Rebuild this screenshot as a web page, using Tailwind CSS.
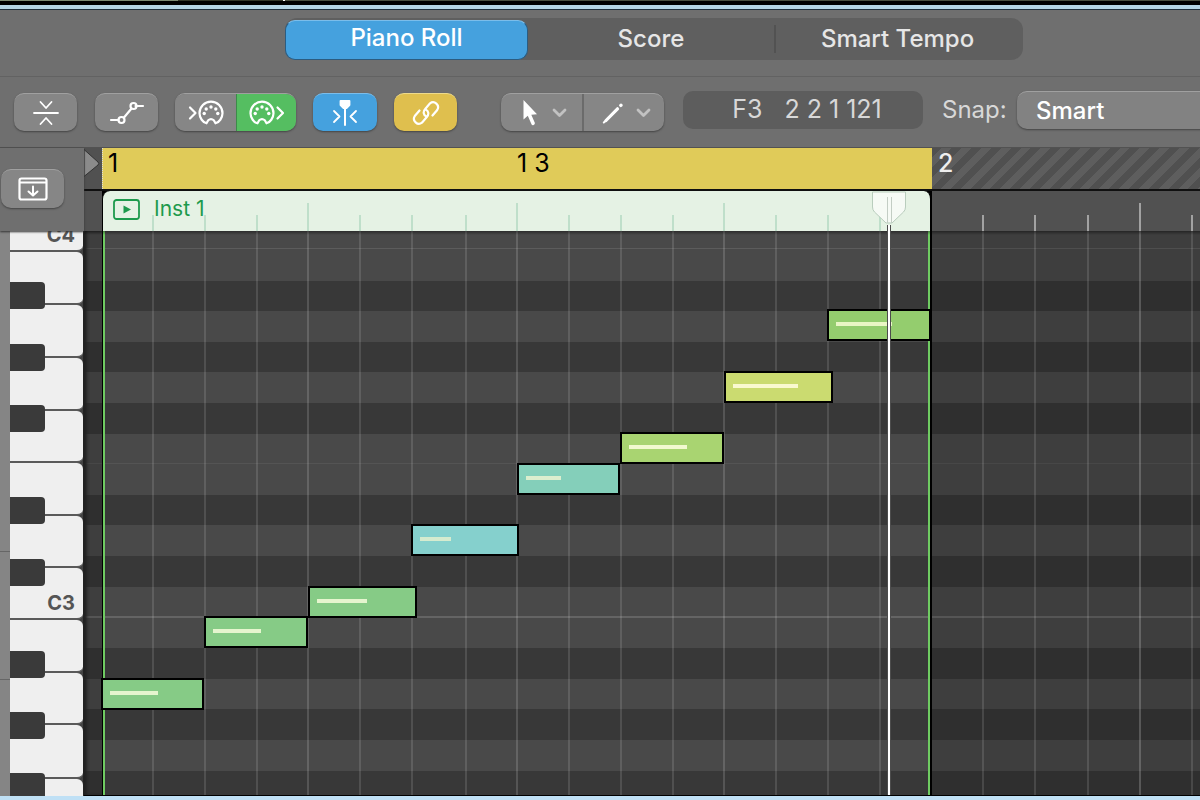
<!DOCTYPE html>
<html lang="en">
<head>
<meta charset="utf-8">
<title>Piano Roll</title>
<script src="https://cdn.jsdelivr.net/npm/@tailwindcss/browser@4"></script>
</head>
<body class="flex min-h-screen flex-col overflow-x-hidden bg-[#6f6f6f] font-['Inter','Liberation_Sans',sans-serif] text-2xl text-[#e6e6e6]">

<!-- Window edge -->
<div class="flex h-px bg-[#4a4f3f]"><div class="w-[178px] bg-[#7d8a72]"></div><div class="w-[105px] bg-[#333628]"></div><div class="w-[2px] bg-white"></div></div>
<div class="h-1 bg-black"></div>
<div class="h-1 bg-[#b5d5e5]"></div>
<div class="h-px bg-[#20303c]"></div>

<!-- Editor tabs -->
<nav class="flex h-[67px] items-start border-b border-[#626262] pt-2 pl-[285px]">
  <div class="flex h-[42px] w-[738px] items-center rounded-xl bg-[#5f5f5f]">
    <button class="mt-px h-10 w-[243px] rounded-[10px] border border-t-[#7bbdea] border-[#2c5c80] bg-[#45a1de] pb-1 font-medium leading-8 text-white">Piano Roll</button>
    <button class="h-7 w-[248px] border-r-2 border-[#525252] pb-1 font-medium leading-7">Score</button>
    <button class="h-7 flex-1 pr-1 pb-1 font-medium leading-7">Smart Tempo</button>
  </div>
</nav>

<!-- Toolbar -->
<div class="flex h-[71px] items-center border-b border-[#525252] pl-[14px]">
  <button aria-label="Collapse mode" class="flex h-[38px] w-[63px] items-center justify-center rounded-[10px] border-t border-[#a0a0a0] bg-[#868686] shadow-[0_1px_2px_#444]">
    <svg width="28" height="26" viewBox="0 0 28 26" fill="none" stroke="#fff" stroke-width="1.8" stroke-linecap="round" stroke-linejoin="round"><path d="M2 13H26M8.500 2L14 8L19.500 2M8.500 24L14 18L19.500 24"/></svg>
  </button>
  <button aria-label="Automation" class="ml-[18px] flex h-[38px] w-[63px] items-center justify-center rounded-[10px] border-t border-[#a0a0a0] bg-[#868686] shadow-[0_1px_2px_#444]">
    <svg width="36" height="26" viewBox="0 0 36 26" fill="none" stroke="#fff" stroke-width="2.200" stroke-linecap="round"><path d="M2 20H9.500M26.500 6H34M15 17.500L22.500 8.500"/><circle cx="12.500" cy="20" r="3"/><circle cx="24.500" cy="6" r="3"/></svg>
  </button>
  <div class="ml-[17px] flex h-[38px] w-[121px] overflow-hidden rounded-[10px] border-t border-[#a0a0a0] shadow-[0_1px_2px_#444]">
    <button aria-label="MIDI In" class="flex w-[61px] items-center justify-center bg-[#868686]">
      <svg width="36" height="26" viewBox="0 0 36 26" fill="none" stroke="#fff" stroke-width="2.200" stroke-linecap="round" stroke-linejoin="round"><path d="M2 7.500L7.500 13L2 18.500"/><path d="M18.500 23.300C15 22.500 11.500 18 11.500 13.200A11.500 11.500 0 0 1 34.500 13.200C34.500 18 31 22.500 27.500 23.300L25.800 20.300Q23 17.800 20.200 20.300Z"/><g fill="#fff" stroke="none"><circle cx="16.200" cy="13.500" r="1.700"/><circle cx="18.200" cy="9" r="1.700"/><circle cx="23" cy="7" r="1.700"/><circle cx="27.800" cy="9" r="1.700"/><circle cx="29.800" cy="13.500" r="1.700"/></g></svg>
    </button>
    <button aria-label="MIDI Out" class="flex flex-1 items-center justify-center border-l border-[#3d8a49] bg-[#55be61]">
      <svg width="36" height="26" viewBox="0 0 36 26" fill="none" stroke="#fff" stroke-width="2.200" stroke-linecap="round" stroke-linejoin="round"><path d="M28.500 7.500L34 13L28.500 18.500"/><path d="M8.500 23.300C5 22.500 1.500 18 1.500 13.200A11.500 11.500 0 0 1 24.500 13.200C24.500 18 21 22.500 17.500 23.300L15.800 20.300Q13 17.800 10.200 20.300Z"/><g fill="#fff" stroke="none"><circle cx="6.200" cy="13.500" r="1.700"/><circle cx="8.200" cy="9" r="1.700"/><circle cx="13" cy="7" r="1.700"/><circle cx="17.800" cy="9" r="1.700"/><circle cx="19.800" cy="13.500" r="1.700"/></g></svg>
    </button>
  </div>
  <button aria-label="Catch playhead" class="ml-[17px] flex h-[38px] w-[64px] items-center justify-center rounded-[10px] border-t border-[#7bbdea] bg-[#45a1de] shadow-[0_1px_2px_#444]">
    <svg width="28" height="28" viewBox="0 0 28 28" fill="none" stroke="#fff" stroke-width="1.800" stroke-linecap="round" stroke-linejoin="round"><path d="M14 9V26" stroke-width="2"/><path d="M9.500 2H18.500V6L15.500 9H12.500L9.500 6Z" fill="#fff"/><path d="M3 12L8.500 17.500L3 23M25 12L19.500 17.500L25 23"/></svg>
  </button>
  <button aria-label="Link" class="ml-[17px] flex h-[38px] w-[63px] items-center justify-center rounded-[10px] border-t border-[#edda8c] bg-[#dfbf4e] shadow-[0_1px_2px_#444]">
    <svg width="28" height="28" viewBox="0 0 28 28" fill="none" stroke="#fff" stroke-width="2.200" stroke-linecap="round"><path d="M14.500 17.500C11 16 11 12.300 13.200 10L18 4.300A5 5 0 0 1 25.200 11L20.500 16.500"/><path d="M13.500 10.500C17 12 17 15.700 14.800 18L10 23.700A5 5 0 0 1 2.800 17L7.500 11.500"/></svg>
  </button>
  <div class="ml-[44px] flex h-[38px] w-[163px] rounded-[10px] border-t border-[#a0a0a0] bg-[#868686] shadow-[0_1px_2px_#444]">
    <button aria-label="Pointer tool" class="flex w-[83px] items-center justify-end gap-[14px] border-r-2 border-[#6b6b6b] pr-[15px]">
      <svg width="16" height="26" viewBox="0 0 16 26" fill="#fff"><path d="M1.500 0V19.500L5.800 15.800L9.600 24.500Q10.300 25.700 11.600 25.100T12.900 23L9.300 14.700L15 14.300Z"/></svg>
      <svg width="15" height="10" viewBox="0 0 15 10" fill="none" stroke="#c2c2c2" stroke-width="2.800" stroke-linecap="round" stroke-linejoin="round"><path d="M2 2L7.500 7.500L13 2"/></svg>
    </button>
    <button aria-label="Pencil tool" class="flex flex-1 items-center justify-end gap-[12px] pr-[13px]">
      <svg width="22" height="22" viewBox="0 0 22 22" fill="none" stroke="#fff" stroke-linecap="round"><path d="M4 18.500L15.500 6.800" stroke-width="3.200"/><path d="M1.800 20.500L4 18.500" stroke-width="2"/><path d="M18.800 3.400L19 3.200" stroke-width="3.400"/></svg>
      <svg width="15" height="10" viewBox="0 0 15 10" fill="none" stroke="#c2c2c2" stroke-width="2.800" stroke-linecap="round" stroke-linejoin="round"><path d="M2 2L7.500 7.500L13 2"/></svg>
    </button>
  </div>
  <output class="mb-1 ml-[19px] flex h-[38px] w-[240px] items-center justify-center gap-[22px] rounded-[10px] bg-[#5d5d5d] pl-2 text-[25px] text-[#d8d8d8]"><span>F3</span><span>2 2 1 121</span></output>
  <label for="snap" class="mb-1 ml-[19px] w-[75px] text-[#d8d8d8]">Snap:</label>
  <select id="snap" class="-mr-4 mb-1 h-[38px] min-w-[198px] flex-1 appearance-none rounded-[10px] border-t border-[#a0a0a0] bg-[#828282] pl-[19px] font-medium leading-8 text-white shadow-[0_1px_2px_#444]"><option>Smart</option></select>
</div>

<main class="flex flex-1">
  <!-- Keyboard column -->
  <div class="flex w-[84px] shrink-0 flex-col">
    <div class="relative z-10 h-[83px] bg-[#6f6f6f] pt-[21px] pl-px shadow-[0_1px_2px_#333]">
      <button aria-label="Import" class="flex h-[39px] w-[63px] items-center justify-center rounded-[10px] border-t border-[#a0a0a0] bg-[#868686] shadow-[0_1px_2px_#444]">
        <svg width="30" height="24" viewBox="0 0 30 24" fill="none" stroke="#fff" stroke-width="2.200" stroke-linecap="round" stroke-linejoin="round"><rect x="1.500" y="1.500" width="27" height="21" rx="2"/><path d="M2 5.500H28M15 9.500V18M10.500 14.500L15 18.500L19.500 14.500" stroke-width="2"/></svg>
      </button>
    </div>
    <div class="flex flex-1">
      <div class="w-[10px] bg-[#858585]"><div class="h-[321px] border-b border-[#666]"></div><div class="h-32 border-b border-[#666]"></div></div>
      <div class="relative flex flex-1 flex-col border-r border-[#222] bg-[#444] text-xl font-bold leading-6 text-[#555]">
        <div class="flex h-[21px] items-end justify-end rounded-br-md border-b-2 border-[#5a5a5a] bg-[#efefef] pr-2 pb-[3px]">C4</div>
        <div class="h-[53px] rounded-r-md border-b-2 border-[#5a5a5a] bg-[#efefef]"></div>
        <div class="h-[53px] rounded-r-md border-b-2 border-[#5a5a5a] bg-[#efefef]"></div>
        <div class="h-[53px] rounded-r-md border-b-2 border-[#5a5a5a] bg-[#efefef]"></div>
        <div class="h-[52px] rounded-r-md border-b-2 border-[#5a5a5a] bg-[#efefef]"></div>
        <div class="h-[53px] rounded-r-md border-b-2 border-[#5a5a5a] bg-[#efefef]"></div>
        <div class="h-[52px] rounded-r-md border-b-2 border-[#5a5a5a] bg-[#efefef]"></div>
        <div class="flex h-[52px] items-end justify-end rounded-r-md border-b-2 border-[#5a5a5a] bg-[#efefef] pr-2 pb-[3px]">C3</div>
        <div class="h-[53px] rounded-r-md border-b-2 border-[#5a5a5a] bg-[#efefef]"></div>
        <div class="h-[52px] rounded-r-md border-b-2 border-[#5a5a5a] bg-[#efefef]"></div>
        <div class="h-[54px] rounded-r-md border-b-2 border-[#5a5a5a] bg-[#efefef]"></div>
        <div class="min-h-[17px] flex-1 rounded-tr-md bg-[#efefef]"></div>
        <!-- Black keys lie over the white ones -->
        <div class="absolute top-[51px] left-0 h-[27px] w-[35px] rounded-r bg-[#3a3a3a]"></div>
        <div class="absolute top-[113px] left-0 h-[27px] w-[35px] rounded-r bg-[#3a3a3a]"></div>
        <div class="absolute top-[174px] left-0 h-[27px] w-[35px] rounded-r bg-[#3a3a3a]"></div>
        <div class="absolute top-[266px] left-0 h-[27px] w-[35px] rounded-r bg-[#3a3a3a]"></div>
        <div class="absolute top-[328px] left-0 h-[27px] w-[35px] rounded-r bg-[#3a3a3a]"></div>
        <div class="absolute top-[420px] left-0 h-[27px] w-[35px] rounded-r bg-[#3a3a3a]"></div>
        <div class="absolute top-[481px] left-0 h-[27px] w-[35px] rounded-r bg-[#3a3a3a]"></div>
        <div class="absolute top-[542px] bottom-0 left-0 w-[35px] rounded-tr bg-[#3a3a3a]"></div>
      </div>
    </div>
  </div>

  <!-- Timeline -->
  <div class="relative flex min-w-0 flex-1 flex-col overflow-hidden bg-[#515151]">
    <!-- Cycle ruler -->
    <div class="flex h-[43px] border-b-2 border-[#101010] text-[25px] leading-[30px] text-black">
      <div class="w-[18px] shrink-0"><svg width="17" height="30" viewBox="0 0 17 30" fill="#8b8b8b" stroke="#333"><path d="M0 1.500L14 14Q15.500 15.500 14 17L0 28.500Z"/></svg></div>
      <div class="flex w-[830px] shrink-0 border-l border-dotted border-[#ddd] bg-[#e0cb59]"><span class="w-[409px] pl-[5px]">1</span><span class="pl-[5px]">1 3</span></div>
      <div class="flex-1 bg-[repeating-linear-gradient(135deg,#505050_0_7px,#5e5e5e_7px_14px)] pl-[6px] font-medium text-[#eee]">2</div>
    </div>
    <!-- Region header -->
    <div class="flex h-[40px]">
      <div class="w-[18px] shrink-0"></div>
      <div class="w-[830px] shrink-0 bg-black">
      <div class="relative flex h-full items-start gap-[14px] overflow-hidden rounded-t-lg border-r-2 border-l border-black bg-[#e5f2e4] pt-[5px] pl-[10px] text-[21px] leading-[26px] text-[#1d9a4c]">
        <svg class="mt-[3px]" width="27" height="21" viewBox="0 0 27 21" fill="none" stroke="#1d9a4c" stroke-width="1.800"><rect x="1" y="1" width="25" height="19" rx="2.500"/><path d="M10.500 6.500V14.500L18 10.500Z" fill="#1d9a4c" stroke="none"/></svg>
        <span>Inst 1</span>
        <div class="absolute inset-y-0 left-[-1px] flex items-end">
          <div class="h-4 w-[52px] border-r-2 border-[#bfdfca]"></div><div class="h-4 w-[52px] border-r-2 border-[#bfdfca]"></div><div class="h-4 w-[52px] border-r-2 border-[#bfdfca]"></div><div class="h-7 w-[51px] border-r-2 border-[#bfdfca]"></div>
          <div class="h-4 w-[52px] border-r-2 border-[#bfdfca]"></div><div class="h-4 w-[52px] border-r-2 border-[#bfdfca]"></div><div class="h-4 w-[54px] border-r-2 border-[#bfdfca]"></div><div class="h-7 w-[51px] border-r-2 border-[#bfdfca]"></div>
          <div class="h-4 w-[52px] border-r-2 border-[#bfdfca]"></div><div class="h-4 w-[52px] border-r-2 border-[#bfdfca]"></div><div class="h-4 w-[52px] border-r-2 border-[#bfdfca]"></div><div class="h-7 w-[51px] border-r-2 border-[#bfdfca]"></div>
          <div class="h-4 w-[52px] border-r-2 border-[#bfdfca]"></div><div class="h-4 w-[52px] border-r-2 border-[#bfdfca]"></div><div class="h-4 w-[52px] border-r-2 border-[#bfdfca]"></div>
        </div>
      </div>
      </div>
      <div class="flex flex-1 items-end">
        <div class="h-4 w-[52px] border-r-2 border-[#a2a2a2]"></div><div class="h-4 w-[52px] border-r-2 border-[#a2a2a2]"></div><div class="h-4 w-[53px] border-r-2 border-[#a2a2a2]"></div><div class="h-7 w-[52px] border-r-2 border-[#a2a2a2]"></div><div class="h-4 w-[52px] border-r-2 border-[#a2a2a2]"></div>
      </div>
    </div>
    <!-- Note grid -->
    <div class="relative flex flex-1 flex-col overflow-hidden border-b border-black">
      <div class="h-[18px] border-b border-[#5c5c5c] bg-[#494949]"></div>
      <div class="h-[32px] bg-[#494949]"></div>
      <div class="h-[30px] bg-[#383838]"></div>
      <div class="h-[31px] bg-[#494949]"></div>
      <div class="h-[30px] bg-[#383838]"></div>
      <div class="h-[31px] bg-[#494949]"></div>
      <div class="h-[31px] bg-[#383838]"></div>
      <div class="h-[30px] border-b border-[#545454] bg-[#494949]"></div>
      <div class="h-[31px] bg-[#494949]"></div>
      <div class="h-[30px] bg-[#383838]"></div>
      <div class="h-[31px] bg-[#494949]"></div>
      <div class="h-[31px] bg-[#383838]"></div>
      <div class="h-[31px] border-b-2 border-[#646464] bg-[#494949]"></div>
      <div class="h-[30px] bg-[#494949]"></div>
      <div class="h-[31px] bg-[#383838]"></div>
      <div class="h-[30px] bg-[#494949]"></div>
      <div class="h-[31px] bg-[#383838]"></div>
      <div class="h-[31px] bg-[#494949]"></div>
      <div class="min-h-[23px] flex-1 bg-[#383838]"></div>

      <!-- Beat lines and the shade outside the region -->
      <div class="absolute inset-0 flex">
        <div class="w-[18px] shrink-0 bg-black/15 shadow-[inset_3px_0_3px_#222]"></div>
        <div class="flex w-[830px] shrink-0 border-r-2 border-l border-black">
          <div class="w-[51px] border-r-2 border-l-2 border-l-[#6fcb62] border-white/12"></div><div class="w-[52px] border-r-2 border-white/12"></div><div class="w-[52px] border-r-2 border-white/12"></div><div class="w-[51px] border-r-2 border-white/15"></div>
          <div class="w-[52px] border-r-2 border-white/12"></div><div class="w-[52px] border-r-2 border-white/12"></div><div class="w-[54px] border-r-2 border-white/12"></div><div class="w-[51px] border-r-2 border-white/15"></div>
          <div class="w-[52px] border-r-2 border-white/12"></div><div class="w-[52px] border-r-2 border-white/12"></div><div class="w-[52px] border-r-2 border-white/12"></div><div class="w-[51px] border-r-2 border-white/15"></div>
          <div class="w-[52px] border-r-2 border-white/12"></div><div class="w-[52px] border-r-2 border-white/12"></div><div class="w-[52px] border-r-2 border-white/12"></div><div class="flex-1 border-r-2 border-[#6fcb62]"></div>
        </div>
        <div class="flex flex-1 bg-black/15">
          <div class="w-[52px] border-r-2 border-white/12"></div><div class="w-[52px] border-r-2 border-white/12"></div><div class="w-[53px] border-r-2 border-white/12"></div><div class="w-[52px] border-r-2 border-white/20"></div><div class="w-[52px] border-r-2 border-white/12"></div>
        </div>
      </div>

      <!-- Notes, placed by pitch and time -->
      <button aria-label="A2" class="absolute top-[447px] left-[17px] h-8 w-[103px] border-2 border-black bg-[#86cb86] pb-[3px] pl-[7px]"><span class="block h-1 w-12 bg-[#e5f5ce]"></span></button>
      <button aria-label="B2" class="absolute top-[385px] left-[120px] h-8 w-[104px] border-2 border-black bg-[#86cb86] pb-[3px] pl-[7px]"><span class="block h-1 w-12 bg-[#e5f5ce]"></span></button>
      <button aria-label="C3" class="absolute top-[355px] left-[224px] h-8 w-[109px] border-2 border-black bg-[#86cb86] pb-[3px] pl-[7px]"><span class="block h-1 w-[50px] bg-[#e5f5ce]"></span></button>
      <button aria-label="D3" class="absolute top-[293px] left-[327px] h-8 w-[108px] border-2 border-black bg-[#85d0cd] pb-[3px] pl-[7px]"><span class="block h-1 w-[31px] bg-[#d5ebcf]"></span></button>
      <button aria-label="E3" class="absolute top-[232px] left-[433px] h-8 w-[103px] border-2 border-black bg-[#84cfba] pb-[3px] pl-[7px]"><span class="block h-1 w-[35px] bg-[#dbeece]"></span></button>
      <button aria-label="F3" class="absolute top-[201px] left-[536px] h-8 w-[104px] border-2 border-black bg-[#a9d471] pb-[3px] pl-[7px]"><span class="block h-1 w-[58px] bg-[#f2f9cf]"></span></button>
      <button aria-label="G3" class="absolute top-[140px] left-[640px] h-8 w-[109px] border-2 border-black bg-[#cbdb70] pb-[3px] pl-[7px]"><span class="block h-1 w-[65px] bg-[#faf9cf]"></span></button>
      <button aria-label="A3" class="absolute top-[78px] left-[743px] h-8 w-[104px] border-2 border-black bg-[#94cd6e] pb-[3px] pl-[7px]"><span class="block h-1 w-[56px] bg-[#e9f6c4]"></span></button>
      <div class="pointer-events-none absolute inset-x-0 top-0 h-1 bg-linear-to-b from-black/40 to-transparent"></div>
    </div>

    <!-- Playhead -->
    <div class="absolute top-[43px] bottom-px left-[787px] flex w-[36px] flex-col items-center">
      <svg class="shrink-0" width="36" height="34" viewBox="0 0 36 34"><path d="M1.500 1H34.500V16Q34.500 19 32.500 21L21 32H15L3.500 21Q1.500 19 1.500 16Z" fill="#f6faf5" stroke="#b9cdbd"/><path d="M16.500 6V32M20.500 6V32" stroke="#c3cdc4"/></svg>
      <div class="w-1 flex-1 border-x border-black/70 bg-white"></div>
    </div>
  </div>
</main>
<div class="h-1 bg-[#bfe0f5]"></div>
</body>
</html>
